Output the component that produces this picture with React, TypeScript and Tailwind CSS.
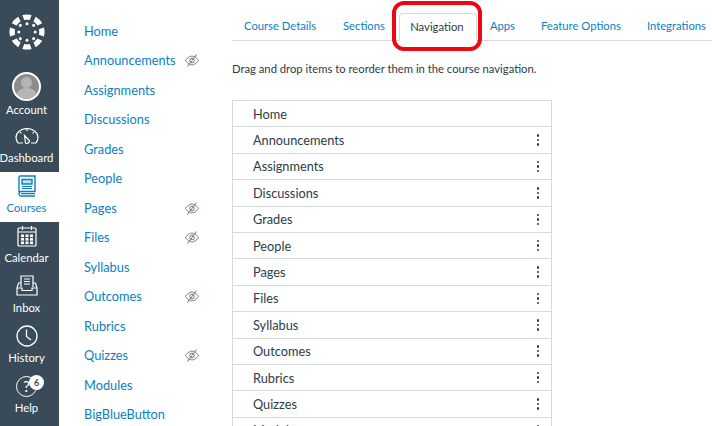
import React from "react";

const font = { fontFamily: "Lato, 'Noto Sans', sans-serif" };

function Logo() {
  const segs = [0, 45, 90, 135, 180, 225, 270, 315];
  return (
    <svg width="36" height="36" viewBox="-18 -18 36 36" fill="#fff">
      {segs.map((a) => (
        <g key={a} transform={`rotate(${a})`}>
          <path d="M-4.6 -16.900 A17.500 17.500 0 0 1 4.600 -16.900 L2.800 -11.900 A12.200 12.200 0 0 0 -2.800 -11.900 Z" />
          <circle cx="0" cy={a % 90 === 0 ? -8.2 : -9.4} r="1.500" />
        </g>
      ))}
    </svg>
  );
}

function Dash() {
  return (
    <svg width="24" height="16" viewBox="0 0 24 16" fill="none" stroke="#fff" strokeWidth="1.200">
      <path d="M8 15 H3 A11 11 0 0 1 1 9.500 A11 9 0 0 1 23 9.500 A11 11 0 0 1 21 15 H16" />
      <path d="M12 1v2M5 4l1.400 1.400M19 4l-1.400 1.400" />
      <path d="M9.500 7.500 L14.500 12.800 A2.600 2.600 0 0 1 10.500 15 Z" />
    </svg>
  );
}

function Book() {
  return (
    <svg width="18" height="22" viewBox="0 0 18 22" fill="none" stroke="#0b7fc0" strokeWidth="1.400">
      <path d="M1 17.500 V2 A1.200 1.200 0 0 1 2.200 1 H17 V16.500 H3 A2.200 2.200 0 0 0 1 18.500 A2.200 2.200 0 0 0 3 21 H17" />
      <path d="M4 4.500h10v4.500H4z" fill="#0b7fc0" fillOpacity="0.25" />
      <path d="M4 11.500h10M4 13.500h10M3 18.600h14" strokeWidth="1.100" />
    </svg>
  );
}

function Cal() {
  return (
    <svg width="20" height="22" viewBox="0 0 20 22" fill="none" stroke="#fff" strokeWidth="1.200">
      <rect x="1" y="3" width="18" height="18" rx="1" />
      <path d="M5.500 1v4M14.500 1v4M1 7h18" />
      <g fill="#fff" stroke="none">
        {[4, 8.5, 13].map((x) => [9.5, 13, 16.5].map((y) => <rect key={`${x}-${y}`} x={x} y={y} width="3" height="2.600" />))}
      </g>
    </svg>
  );
}

function Inbox() {
  return (
    <svg width="22" height="22" viewBox="0 0 22 22" fill="none" stroke="#fff" strokeWidth="1.200">
      <path d="M5 12V1h12v11" />
      <path d="M8 4h6M8 6.500h6M8 9h6" />
      <path d="M5 8H2.500L1 13v7h20v-7l-1.500-5H17" />
      <path d="M1 13h5v2.500h10V13h5" />
    </svg>
  );
}

function Clock() {
  return (
    <svg width="22" height="22" viewBox="0 0 22 22" fill="none" stroke="#fff" strokeWidth="1.300">
      <circle cx="11" cy="11" r="10" />
      <path d="M10.500 4.500V11.500L15 15" />
    </svg>
  );
}

function Rail({ label, children, active }: { label: string; children: React.ReactNode; active?: boolean }) {
  return (
    <div className={`h-[50px] flex flex-col items-center justify-end pb-[7px] pr-[6px] ${active ? "bg-white text-[#0b7fc0]" : "text-white"}`}>
      <div className="h-[22px] mb-[4px] flex items-center justify-center relative">{children}</div>
      <div className="text-[11.3px] leading-[14px] whitespace-nowrap">{label}</div>
    </div>
  );
}

function EyeOff() {
  return (
    <svg width="14" height="13" viewBox="0 0 14 13" fill="none" stroke="#6b7780" strokeWidth="1">
      <path d="M0.500 6.500C3 3 5 2.200 7 2.200S11 3 13.500 6.500C11 10 9 10.800 7 10.800S3 10 0.500 6.500Z" />
      <circle cx="7" cy="6.500" r="2.300" />
      <path d="M11.500 0.500L2.500 12.500" />
    </svg>
  );
}

const links: [string, boolean][] = [
  ["Home", false],
  ["Announcements", true],
  ["Assignments", false],
  ["Discussions", false],
  ["Grades", false],
  ["People", false],
  ["Pages", true],
  ["Files", true],
  ["Syllabus", false],
  ["Outcomes", true],
  ["Rubrics", false],
  ["Quizzes", true],
  ["Modules", false],
  ["BigBlueButton", false],
];

const rows = ["Home", "Announcements", "Assignments", "Discussions", "Grades", "People", "Pages", "Files", "Syllabus", "Outcomes", "Rubrics", "Quizzes", "Modules"];

export default function App() {
  return (
    <div className="w-[712px] h-[426px] overflow-hidden flex bg-white relative" style={font}>
      <div className="w-[59px] shrink-0 bg-[#394b58] flex flex-col">
        <div className="h-[64px] flex items-start justify-center pt-[14px] pr-[6px]"><Logo /></div>
        <div className="h-[58px] flex flex-col items-center text-white pr-[6px]">
          <div className="w-[29px] h-[29px] mt-[8px] rounded-full border-2 border-white bg-[#8c8c8c] overflow-hidden flex flex-col items-center">
            <div className="w-[11px] h-[13px] mt-[3px] rounded-full bg-[#b5b5b5]" />
            <div className="w-[23px] h-[12px] rounded-t-full bg-[#b5b5b5]" />
          </div>
          <div className="text-[11.3px] leading-[14px] mt-[2px]">Account</div>
        </div>
        <Rail label="Dashboard"><Dash /></Rail>
        <Rail label="Courses" active><Book /></Rail>
        <Rail label="Calendar"><Cal /></Rail>
        <Rail label="Inbox"><Inbox /></Rail>
        <Rail label="History"><Clock /></Rail>
        <Rail label="Help">
          <div className="w-[21px] h-[21px] rounded-full border border-white flex items-center justify-center text-[16px]">?</div>
          <div className="absolute top-0 -right-[7px] w-[15px] h-[15px] rounded-full bg-white text-[#394b58] text-[9px] font-bold flex items-center justify-center">6</div>
        </Rail>
      </div>

      <div className="w-[173px] shrink-0 pl-[25px] pt-[16.5px] flex flex-col">
        {links.map(([l, hidden]) => (
          <div key={l} className="h-[29.5px] shrink-0 flex items-center justify-between pr-[33px] text-[12.8px] text-[#0b7fc0]">
            <span>{l}</span>
            {hidden && <EyeOff />}
          </div>
        ))}
      </div>

      <div className="flex-1 min-w-0 flex flex-col">
        <div className="h-[41px] shrink-0 border-b border-[#d5dadf] flex items-end text-[11.25px] text-[#0b7fc0] whitespace-nowrap">
          <div className="h-[28px] flex items-center ml-[12px]">Course Details</div>
          <div className="h-[28px] flex items-center ml-[27px]">Sections</div>
          <div className="w-[78px] h-[28px] ml-[14px] mb-[-1px] bg-white border border-b-0 border-[#d5dadf] rounded-t flex items-center justify-center pr-[2px] text-[#2d3b45]">Navigation</div>
          <div className="h-[28px] flex items-center ml-[13px]">Apps</div>
          <div className="h-[28px] flex items-center ml-[26px]">Feature Options</div>
          <div className="h-[28px] flex items-center ml-[26px]">Integrations</div>
        </div>
        <div className="h-[59px] shrink-0 pt-[20px] text-[11.25px] leading-[16px] text-[#2d3b45] whitespace-nowrap">Drag and drop items to reorder them in the course navigation.</div>
        <div className="w-[320px] shrink-0 border border-[#d5dadf] border-b-0">
          {rows.map((r, i) => (
            <div key={r} className="h-[26.4px] border-b border-[#d5dadf] flex items-center justify-between pl-[20px] pr-[12px] text-[12.75px] text-[#2d3b45]">
              <span className="pt-[1px]">{r}</span>
              {i > 0 && (
                <span className="flex flex-col gap-[2px]">
                  <span className="w-[2.5px] h-[2.5px] rounded-full bg-[#2d3b45]" />
                  <span className="w-[2.5px] h-[2.5px] rounded-full bg-[#2d3b45]" />
                  <span className="w-[2.5px] h-[2.5px] rounded-full bg-[#2d3b45]" />
                </span>
              )}
            </div>
          ))}
        </div>
      </div>

      <div className="absolute left-[392px] top-[1px] w-[90px] h-[50px] border-[4px] border-[#ee0612] rounded-[12px]" />
    </div>
  );
}
